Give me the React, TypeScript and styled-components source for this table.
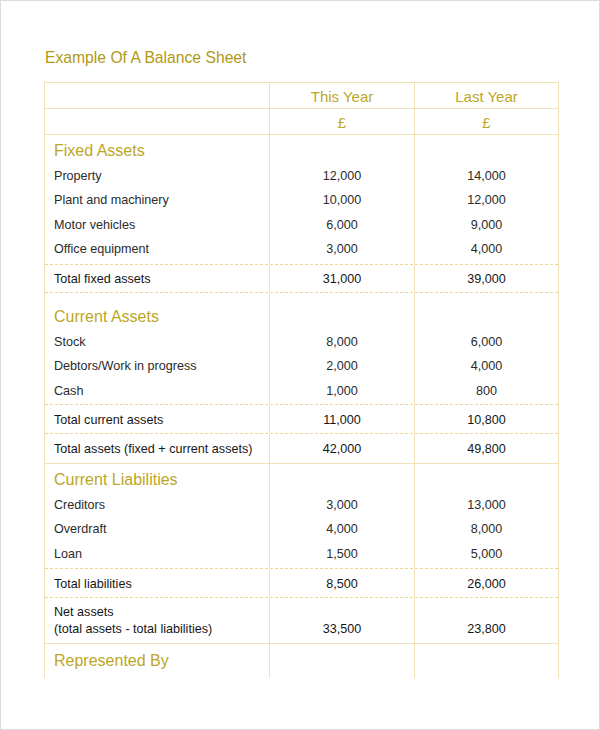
import React from "react";
import styled, { createGlobalStyle } from "styled-components";

const GOLD = "#b09915";
const HEAD_GOLD = "#bba626";
const LINE = "#f0e1b6";
const DASH = "#ecd98f";
const FONT = `"Liberation Sans", Arial, sans-serif`;

const Global = createGlobalStyle`
  html, body { margin: 0; padding: 0; background: #fff; }
  body { font-family: ${FONT}; }
`;

const Page = styled.div`
  width: 600px;
  height: 730px;
  box-sizing: border-box;
  border: 1px solid #dcdcdc;
  padding: 47px 0 0 43px;
  background: #fff;
`;

const Title = styled.h1`
  margin: 0 0 14px 1px;
  font: 400 15.7px/20px ${FONT};
  color: ${GOLD};
`;

const Table = styled.div`
  width: 515px;
  box-sizing: border-box;
  border: 1px solid ${LINE};
  border-bottom: none;
`;

type Rule = "solid" | "dashed" | "none";

const Row = styled.div<{ $h: number; $rule: Rule }>`
  display: grid;
  grid-template-columns: 224px 145px 144px;
  height: ${(p) => p.$h}px;
  box-sizing: border-box;
  border-bottom: ${(p) =>
    p.$rule === "solid"
      ? `1px solid ${LINE}`
      : p.$rule === "dashed"
      ? `1px dashed ${DASH}`
      : "none"};
`;

const Cell = styled.div<{ $divider?: boolean; $center?: boolean; $pt?: number; $middle?: boolean }>`
  box-sizing: border-box;
  border-left: ${(p) => (p.$divider ? `1px solid ${LINE}` : "none")};
  padding: ${(p) => p.$pt ?? 0}px 0 0 ${(p) => (p.$center ? 0 : 9)}px;
  display: flex;
  flex-direction: column;
  justify-content: ${(p) => (p.$middle ? "center" : "flex-start")};
  align-items: ${(p) => (p.$center ? "center" : "flex-start")};
`;

const Line = styled.div<{ $h: number; $tone?: "item" | "total" }>`
  height: ${(p) => p.$h}px;
  box-sizing: border-box;
  padding-top: 2px;
  display: flex;
  align-items: center;
  font: 400 12.6px/1 ${FONT};
  color: ${(p) => (p.$tone === "total" ? "#161616" : "#2b2b2b")};
  white-space: nowrap;
`;

const Heading = styled.div`
  height: 25px;
  box-sizing: border-box;
  padding-top: 1px;
  display: flex;
  align-items: center;
  font: 400 16px/1 ${FONT};
  color: ${HEAD_GOLD};
  white-space: nowrap;
`;

const ColHead = styled.div`
  padding-top: 1px;
  font: 400 15px/1 ${FONT};
  color: ${HEAD_GOLD};
`;

type Item = [string, string, string];

type Block =
  | { kind: "section"; title: string; pt: number; h: number; rule: Rule; items: Item[] }
  | { kind: "total"; label: string; a: string; b: string; h: number; rule: Rule };

const blocks: Block[] = [
  {
    kind: "section",
    title: "Fixed Assets",
    pt: 3,
    h: 130,
    rule: "dashed",
    items: [
      ["Property", "12,000", "14,000"],
      ["Plant and machinery", "10,000", "12,000"],
      ["Motor vehicles", "6,000", "9,000"],
      ["Office equipment", "3,000", "4,000"],
    ],
  },
  { kind: "total", label: "Total fixed assets", a: "31,000", b: "39,000", h: 28, rule: "dashed" },
  {
    kind: "section",
    title: "Current Assets",
    pt: 11,
    h: 112,
    rule: "dashed",
    items: [
      ["Stock", "8,000", "6,000"],
      ["Debtors/Work in progress", "2,000", "4,000"],
      ["Cash", "1,000", "800"],
    ],
  },
  { kind: "total", label: "Total current assets", a: "11,000", b: "10,800", h: 29, rule: "dashed" },
  {
    kind: "total",
    label: "Total assets (fixed + current assets)",
    a: "42,000",
    b: "49,800",
    h: 30,
    rule: "solid",
  },
  {
    kind: "section",
    title: "Current Liabilities",
    pt: 3,
    h: 105,
    rule: "dashed",
    items: [
      ["Creditors", "3,000", "13,000"],
      ["Overdraft", "4,000", "8,000"],
      ["Loan", "1,500", "5,000"],
    ],
  },
  { kind: "total", label: "Total liabilities", a: "8,500", b: "26,000", h: 29, rule: "dashed" },
];

const ITEM_H = 24.5;

function Section({ b }: { b: Extract<Block, { kind: "section" }> }) {
  return (
    <Row $h={b.h} $rule={b.rule}>
      <Cell $pt={b.pt}>
        <Heading>{b.title}</Heading>
        {b.items.map((it) => (
          <Line key={it[0]} $h={ITEM_H}>
            {it[0]}
          </Line>
        ))}
      </Cell>
      {[1, 2].map((col) => (
        <Cell key={col} $divider $center $pt={b.pt + 25}>
          {b.items.map((it) => (
            <Line key={it[0]} $h={ITEM_H}>
              {it[col]}
            </Line>
          ))}
        </Cell>
      ))}
    </Row>
  );
}

function Total({ b }: { b: Extract<Block, { kind: "total" }> }) {
  return (
    <Row $h={b.h} $rule={b.rule}>
      <Cell $middle>
        <Line $h={20} $tone="total">
          {b.label}
        </Line>
      </Cell>
      <Cell $divider $center $middle>
        <Line $h={20} $tone="total">
          {b.a}
        </Line>
      </Cell>
      <Cell $divider $center $middle>
        <Line $h={20} $tone="total">
          {b.b}
        </Line>
      </Cell>
    </Row>
  );
}

export default function App() {
  return (
    <>
      <Global />
      <Page>
        <Title>Example Of A Balance Sheet</Title>
        <Table>
          <Row $h={26} $rule="solid">
            <Cell />
            <Cell $divider $center $middle>
              <ColHead>This Year</ColHead>
            </Cell>
            <Cell $divider $center $middle>
              <ColHead>Last Year</ColHead>
            </Cell>
          </Row>
          <Row $h={26} $rule="solid">
            <Cell />
            <Cell $divider $center $middle>
              <ColHead>£</ColHead>
            </Cell>
            <Cell $divider $center $middle>
              <ColHead>£</ColHead>
            </Cell>
          </Row>
          {blocks.map((b, i) =>
            b.kind === "section" ? <Section key={i} b={b} /> : <Total key={i} b={b} />
          )}
          <Row $h={46} $rule="solid">
            <Cell $pt={5}>
              <Line $h={17} $tone="total">
                Net assets
              </Line>
              <Line $h={17} $tone="total">
                (total assets - total liabilities)
              </Line>
            </Cell>
            <Cell $divider $center $pt={22}>
              <Line $h={17} $tone="total">
                33,500
              </Line>
            </Cell>
            <Cell $divider $center $pt={22}>
              <Line $h={17} $tone="total">
                23,800
              </Line>
            </Cell>
          </Row>
          <Row $h={34} $rule="none">
            <Cell $pt={4}>
              <Heading>Represented By</Heading>
            </Cell>
            <Cell $divider />
            <Cell $divider />
          </Row>
        </Table>
      </Page>
    </>
  );
}
